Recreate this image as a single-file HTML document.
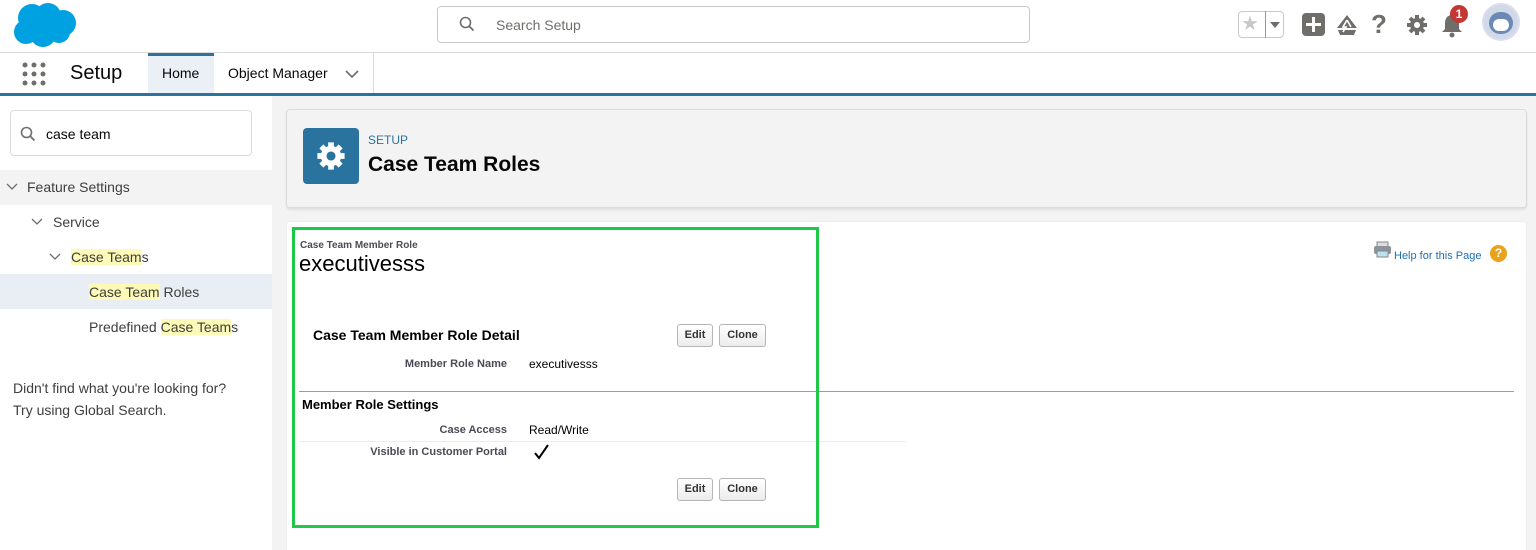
<!DOCTYPE html>
<html><head><style>
*{margin:0;padding:0;box-sizing:border-box}
html,body{width:1536px;height:550px;overflow:hidden}
body{background:#f3f3f3;font-family:"Liberation Sans",Arial,sans-serif;position:relative;color:#080707}
.abs{position:absolute}
.btn{position:absolute;height:23px;border:1px solid #b5b5b5;border-radius:3px;background:linear-gradient(#fff,#ececec);font-size:11px;font-weight:bold;color:#333;text-align:center;line-height:21px}
.hl{background:#fdfab8}
</style></head><body>
<div class="abs" style="left:0;top:0;width:1536px;height:53px;background:#fff;border-bottom:1px solid #dddbda"></div>
<svg class="abs" style="left:12px;top:2px" width="66" height="46" viewBox="0 0 66 46"><g fill="#00a1e0"><circle cx="20" cy="16" r="14"/><circle cx="36" cy="14" r="13"/><circle cx="51" cy="21" r="13"/><circle cx="14" cy="30" r="12"/><circle cx="31" cy="32" r="13"/><circle cx="47" cy="30" r="11"/></g></svg>
<div class="abs" style="left:437px;top:6px;width:593px;height:37px;border:1px solid #c9c9c9;border-radius:4px;background:#fff"></div>
<svg class="abs" style="left:459px;top:16px" width="16" height="16" viewBox="0 0 16 16"><circle cx="6.5" cy="6.5" r="5" fill="none" stroke="#706e6b" stroke-width="1.6"/><path d="M10 10l4.5 4.5" stroke="#706e6b" stroke-width="1.8"/></svg>
<div class="abs" style="left:496px;top:17px;font-size:14px;color:#706e6b">Search Setup</div>
<div class="abs" style="left:1238px;top:11px;width:46px;height:27px;border:1px solid #c9c9c9;border-radius:4px;background:#fff"></div>
<div class="abs" style="left:1265px;top:11px;width:1px;height:27px;background:#999"></div>
<div class="abs" style="left:1241px;top:11px;font-size:20px;color:#c9c9c9">★</div>
<div class="abs" style="left:1270px;top:22px;width:0;height:0;border-left:5px solid transparent;border-right:5px solid transparent;border-top:6px solid #706e6b"></div>
<div class="abs" style="left:1302px;top:13px;width:23px;height:23px;background:#706e6b;border-radius:4px"></div>
<div class="abs" style="left:1312px;top:17px;width:3px;height:15px;background:#fff"></div>
<div class="abs" style="left:1306px;top:23px;width:15px;height:3px;background:#fff"></div>
<svg class="abs" style="left:1335px;top:14px" width="24" height="22" viewBox="0 0 24 22"><path d="M12 1L2 14h20z" fill="#706e6b"/><path d="M3 16h18l-2 5H5z" fill="#706e6b"/><path d="M12 6l-4 7h3l-3 5M12 6l4 7" stroke="#fff" stroke-width="1.6" fill="none"/></svg>
<div class="abs" style="left:1371px;top:9px;font-size:26px;font-weight:bold;color:#706e6b">?</div>
<svg class="abs" style="left:1406px;top:14px" width="22" height="22" viewBox="0 0 22 22"><circle cx="11" cy="11" r="7" fill="#706e6b"/><g stroke="#706e6b" stroke-width="4"><path d="M11 1v20M1 11h20M4 4l14 14M18 4L4 18"/></g><circle cx="11" cy="11" r="3" fill="#fff"/></svg>
<svg class="abs" style="left:1440px;top:12px" width="24" height="26" viewBox="0 0 24 26"><path d="M12 3c-5 0-7 4-7 8v6l-3 3h20l-3-3v-6c0-4-2-8-7-8z" fill="#706e6b"/><circle cx="12" cy="23" r="2.5" fill="#706e6b"/></svg>
<div class="abs" style="left:1450px;top:5px;width:18px;height:18px;border-radius:9px;background:#c23934;color:#fff;font-size:12px;font-weight:bold;text-align:center;line-height:18px">1</div>
<div class="abs" style="left:1482px;top:3px;width:38px;height:38px;border-radius:19px;background:#cfd9e8;border:2px solid #dde"></div>
<div class="abs" style="left:1489px;top:12px;width:24px;height:22px;border-radius:11px;background:#6b89b4"></div>
<div class="abs" style="left:1493px;top:19px;width:16px;height:12px;border-radius:6px;background:#fff"></div>
<div class="abs" style="left:0;top:53px;width:1536px;height:41px;background:#fff"></div>
<div class="abs" style="left:0;top:93px;width:1536px;height:3px;background:#2a739e"></div>
<svg class="abs" style="left:21px;top:61px" width="26" height="26" viewBox="0 0 26 26" fill="#706e6b"><circle cx="4" cy="4" r="2.5"/><circle cx="13" cy="4" r="2.5"/><circle cx="22" cy="4" r="2.5"/><circle cx="4" cy="13" r="2.5"/><circle cx="13" cy="13" r="2.5"/><circle cx="22" cy="13" r="2.5"/><circle cx="4" cy="22" r="2.5"/><circle cx="13" cy="22" r="2.5"/><circle cx="22" cy="22" r="2.5"/></svg>
<div class="abs" style="left:70px;top:62px;font-size:20px;color:#080707">Setup</div>
<div class="abs" style="left:148px;top:53px;width:66px;height:40px;background:#eaf0f5;border-top:3px solid #2a739e"></div>
<div class="abs" style="left:162px;top:65px;font-size:14px;color:#080707">Home</div>
<div class="abs" style="left:228px;top:65px;font-size:14px;color:#080707">Object Manager</div>
<svg class="abs" style="left:345px;top:69px" width="14" height="10" viewBox="0 0 14 10"><path d="M1 2l6 6 6-6" stroke="#706e6b" stroke-width="1.6" fill="none"/></svg>
<div class="abs" style="left:373px;top:53px;width:1px;height:40px;background:#dddbda"></div>
<div class="abs" style="left:0;top:96px;width:272px;height:454px;background:#fff"></div>
<div class="abs" style="left:10px;top:110px;width:242px;height:46px;border:1px solid #dddbda;border-radius:4px"></div>
<svg class="abs" style="left:20px;top:126px" width="16" height="16" viewBox="0 0 16 16"><circle cx="6.5" cy="6.5" r="5" fill="none" stroke="#706e6b" stroke-width="1.6"/><path d="M10 10l4.5 4.5" stroke="#706e6b" stroke-width="1.8"/></svg>
<div class="abs" style="left:46px;top:126px;font-size:14px">case team</div>
<div class="abs" style="left:0;top:170px;width:272px;height:35px;background:#f3f3f3"></div>
<svg class="abs" style="left:6px;top:183px" width="12" height="8"><path d="M1 1l5 5 5-5" stroke="#706e6b" stroke-width="1.3" fill="none"/></svg>
<div class="abs" style="left:27px;top:179px;font-size:14px;color:#3e3e3c">Feature Settings</div>
<svg class="abs" style="left:31px;top:218px" width="12" height="8"><path d="M1 1l5 5 5-5" stroke="#706e6b" stroke-width="1.3" fill="none"/></svg>
<div class="abs" style="left:53px;top:214px;font-size:14px;color:#3e3e3c">Service</div>
<svg class="abs" style="left:49px;top:253px" width="12" height="8"><path d="M1 1l5 5 5-5" stroke="#706e6b" stroke-width="1.3" fill="none"/></svg>
<div class="abs" style="left:71px;top:249px;font-size:14px;color:#3e3e3c"><span class="hl">Case Team</span>s</div>
<div class="abs" style="left:0;top:274px;width:272px;height:35px;background:#e8eef3"></div>
<div class="abs" style="left:89px;top:284px;font-size:14px;color:#3e3e3c"><span class="hl">Case Team</span> Roles</div>
<div class="abs" style="left:89px;top:319px;font-size:14px;color:#3e3e3c">Predefined <span class="hl">Case Team</span>s</div>
<div class="abs" style="left:13px;top:377px;font-size:14px;color:#3e3e3c;line-height:22px">Didn't find what you're looking for?<br>Try using Global Search.</div>
<div class="abs" style="left:286px;top:109px;width:1241px;height:99px;background:#f3f3f3;border:1px solid #dddbda;border-radius:4px;box-shadow:0 2px 2px rgba(0,0,0,.08)"></div>
<div class="abs" style="left:303px;top:128px;width:56px;height:56px;background:#2a739e;border-radius:4px"></div>
<svg class="abs" style="left:314px;top:139px" width="34" height="34" viewBox="0 0 30 30"><circle cx="15" cy="15" r="9" fill="#fff"/><g stroke="#fff" stroke-width="5"><path d="M15 3v24M3 15h24M6.5 6.5l17 17M23.5 6.5l-17 17"/></g><circle cx="15" cy="15" r="4" fill="#2a739e"/></svg>
<div class="abs" style="left:368px;top:133px;font-size:12px;color:#2a739e">SETUP</div>
<div class="abs" style="left:368px;top:153px;font-size:21px;font-weight:bold;color:#080707">Case Team Roles</div>
<div class="abs" style="left:286px;top:221px;width:1241px;height:340px;background:#fff;border-radius:4px;border:1px solid #eee"></div>
<div class="abs" style="left:300px;top:240px;font-size:10px;font-weight:bold;color:#4a4a56">Case Team Member Role</div>
<div class="abs" style="left:299px;top:251px;font-size:22px;color:#000">executivesss</div>
<svg class="abs" style="left:1373px;top:241px" width="19" height="17" viewBox="0 0 19 17"><rect x="4" y="1" width="11" height="5" fill="#ddd" stroke="#888"/><rect x="1" y="5" width="17" height="8" rx="2" fill="#8a949c"/><rect x="4" y="10" width="11" height="6" fill="#bfe0f0" stroke="#888"/></svg>
<div class="abs" style="left:1394px;top:250px;font-size:11px;color:#1e6fb5">Help for this Page</div>
<div class="abs" style="left:1490px;top:245px;width:17px;height:17px;border-radius:9px;background:#e8a21b;color:#fff;font-size:12px;font-weight:bold;text-align:center;line-height:17px">?</div>
<div class="abs" style="left:313px;top:327px;font-size:14px;font-weight:bold;color:#000">Case Team Member Role Detail</div>
<div class="btn" style="left:677px;top:324px;width:36px">Edit</div>
<div class="btn" style="left:719px;top:324px;width:47px">Clone</div>
<div class="abs" style="left:300px;top:358px;width:207px;text-align:right;font-size:11px;font-weight:bold;color:#4a4a56">Member Role Name</div>
<div class="abs" style="left:529px;top:357px;font-size:12px;color:#000">executivesss</div>
<div class="abs" style="left:299px;top:391px;width:1215px;height:1px;background:#8e9dbe"></div>
<div class="abs" style="left:302px;top:397px;font-size:13px;font-weight:bold;color:#000">Member Role Settings</div>
<div class="abs" style="left:300px;top:424px;width:207px;text-align:right;font-size:11px;font-weight:bold;color:#4a4a56">Case Access</div>
<div class="abs" style="left:529px;top:423px;font-size:12px;color:#000">Read/Write</div>
<div class="abs" style="left:299px;top:441px;width:607px;height:1px;background:#ececec"></div>
<div class="abs" style="left:300px;top:446px;width:207px;text-align:right;font-size:11px;font-weight:bold;color:#4a4a56">Visible in Customer Portal</div>
<svg class="abs" style="left:533px;top:444px" width="18" height="17" viewBox="0 0 18 17"><path d="M2 9l4 5 9-13" stroke="#000" stroke-width="2" fill="none"/></svg>
<div class="btn" style="left:677px;top:478px;width:36px">Edit</div>
<div class="btn" style="left:719px;top:478px;width:47px">Clone</div>
<div class="abs" style="left:292px;top:227px;width:527px;height:301px;border:3px solid #1ec94a"></div>
</body></html>
